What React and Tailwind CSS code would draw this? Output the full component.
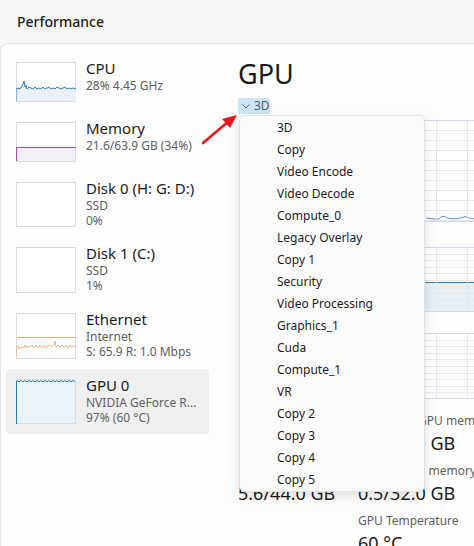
import React from "react";

const FONT = { fontFamily: '"Segoe UI", "Noto Sans", "Open Sans", sans-serif' };

function CpuThumb() {
  const pts = [[0,27],[2,26],[4,27],[6,24],[7,22],[8,19],[9,25],[10,23],[11,27],[13,25],[15,26],[17,27],[19,25],[21,27],[23,26],[25,27],[27,25],[29,27],[31,26],[33,25],[35,27],[37,26],[39,27],[41,25],[43,26],[45,27],[47,26],[49,25],[51,27],[53,26],[55,27],[57,26],[60,27]];
  const line = "M0,39 L" + pts.map(p => p.join(",")).join(" L");
  const fill = "M0,39 L" + pts.map(p => p.join(",")).join(" L") + " L60,39 Z";
  return (
    <svg width="60" height="40" viewBox="0 0 60 40" className="block">
      <rect x="0.5" y="0.5" width="59" height="39" fill="#ffffff" stroke="#d9dde2" />
      <path d={fill} fill="#eaf1f8" />
      <path d={line} fill="none" stroke="#2f7bb4" strokeWidth="1" />
    </svg>
  );
}

function MemThumb() {
  return (
    <svg width="60" height="40" viewBox="0 0 60 40" className="block">
      <rect x="0.5" y="0.5" width="59" height="39" fill="#ffffff" stroke="#d9dde2" />
      <rect x="1" y="25" width="58" height="14" fill="#f3eff6" />
      <path d="M0.5,39 L0.5,25.5 L60,25.5" fill="none" stroke="#9d55a8" strokeWidth="1.2" />
    </svg>
  );
}

function EmptyThumb({ h }) {
  return (
    <svg width="60" height={h} viewBox={`0 0 60 ${h}`} className="block">
      <rect x="0.5" y="0.5" width="59" height={h - 1} fill="#ffffff" stroke="#dcdcdc" />
    </svg>
  );
}

function EthThumb() {
  const pts = [[0,35],[2,33],[3,36],[5,34],[7,35],[9,32],[10,35],[12,33],[14,34],[16,32],[18,34],[20,33],[22,35],[24,32],[26,34],[28,33],[30,35],[32,33],[34,32],[36,34],[38,31],[39,28],[40,34],[42,32],[44,35],[46,32],[48,34],[50,33],[52,35],[54,32],[56,34],[58,33],[60,34]];
  const line = "M0,45 L" + pts.map(p => p.join(",")).join(" L");
  return (
    <svg width="60" height="46" viewBox="0 0 60 46" className="block">
      <rect x="0.5" y="0.5" width="59" height="45" fill="#ffffff" stroke="#dcdcdc" />
      <line x1="1" y1="24.5" x2="59" y2="24.5" stroke="#e9a77a" strokeWidth="1" />
      <path d={line} fill="none" stroke="#e39a6a" strokeWidth="0.8" />
    </svg>
  );
}

function GpuThumb() {
  let d = "M0.5,45 L0.5,2";
  for (let x = 1; x <= 60; x += 2) d += ` L${x},${x % 4 === 1 ? 1.5 : 2.8}`;
  return (
    <svg width="60" height="45" viewBox="0 0 60 45" className="block">
      <rect x="0.5" y="0.5" width="59" height="44" fill="#eaf2fa" stroke="#d6dde6" />
      <path d={d} fill="none" stroke="#2f7bb4" strokeWidth="1" />
    </svg>
  );
}

const items = [
  { name: "CPU", lines: ["28% 4.45 GHz"], cls: "h-[60px]", thumb: <CpuThumb /> },
  { name: "Memory", lines: ["21.6/63.9 GB (34%)"], cls: "h-[60px]", thumb: <MemThumb /> },
  { name: "Disk 0 (H: G: D:)", lines: ["SSD", "0%"], cls: "h-[65px]", thumb: <EmptyThumb h={45} /> },
  { name: "Disk 1 (C:)", lines: ["SSD", "1%"], cls: "h-[66px]", thumb: <EmptyThumb h={46} /> },
  { name: "Ethernet", lines: ["Internet", "S: 65.9  R: 1.0 Mbps"], cls: "h-[66px]", thumb: <EthThumb /> },
  { name: "GPU 0", lines: ["NVIDIA GeForce R...", "97% (60 °C)"], cls: "h-[65px]", thumb: <GpuThumb />, selected: true },
];

function Grid({ h, step, children }) {
  const vx = [8, 39, 70, 101, 132, 163, 194, 225];
  const hs = [];
  for (let y = step; y < h - 1; y += step) hs.push(y);
  return (
    <svg width="233" height={h} viewBox={`0 0 233 ${h}`} className="block">
      <rect x="0.5" y="0.5" width="240" height={h - 1} fill="#ffffff" stroke="#d4dde7" />
      {children}
      {hs.map((y, i) => (
        <line key={"h" + i} x1="1" x2="233" y1={Math.round(y) + 0.5} y2={Math.round(y) + 0.5} stroke="#e4e9ef" />
      ))}
      {vx.map((x, i) => (
        <line key={"v" + i} x1={x + 0.5} x2={x + 0.5} y1="1" y2={h - 1} stroke="#e4e9ef" />
      ))}
    </svg>
  );
}

const menuItems = [
  "3D", "Copy", "Video Encode", "Video Decode", "Compute_0", "Legacy Overlay", "Copy 1",
  "Security", "Video Processing", "Graphics_1", "Cuda", "Compute_1", "VR", "Copy 2",
  "Copy 3", "Copy 4", "Copy 5",
];

export default function App() {
  return (
    <div className="relative w-[474px] h-[546px] overflow-hidden bg-[#f8f8f8] text-[#1b1b1b]" style={FONT}>
      <div className="h-[43px] flex items-center px-[17px] text-[14px] font-medium">Performance</div>
      <div className="h-[503px] flex rounded-tl-[8px] border-t border-l border-[#e5e5e5] bg-[#fdfdfd]">
        <div className="w-[213px] shrink-0 pt-[8px] px-[5px] flex flex-col">
          {items.map((it) => (
            <div
              key={it.name}
              className={`${it.cls} flex items-start gap-[10px] px-[10px] pt-[10px] rounded-[4px] ${it.selected ? "bg-[#f0f0f0]" : ""}`}
            >
              <div className="shrink-0">{it.thumb}</div>
              <div className="-mt-[4px] min-w-0">
                <div className="text-[15px] leading-[20px] whitespace-nowrap">{it.name}</div>
                {it.lines.map((l) => (
                  <div key={l} className="text-[12px] leading-[15px] text-[#5f5f5f] whitespace-nowrap">{l}</div>
                ))}
              </div>
            </div>
          ))}
        </div>
        <div className="flex-1 pl-[24px] pt-[12px] flex flex-col min-w-0">
          <div className="text-[27px] leading-[36px]">GPU</div>
          <div className="mt-[6px] h-[16px] w-[32px] flex items-center gap-[4px] bg-[#cce4f7] pl-[4px]">
            <svg width="8" height="5" viewBox="0 0 8 5"><path d="M0.5,0.5 L4,4 L7.5,0.5" fill="none" stroke="#6a6a6a" strokeWidth="1" /></svg>
            <span className="text-[12px] leading-[16px] text-[#5a5a5a]">3D</span>
          </div>
          <div className="mt-[6px] ml-[4px]">
            <Grid h={102} step={10}>
              <path d="M184,98 L192,99 L197,99 Q201,94 205,98 L212,99 L219,98 Q223,95 227,98 L233,99" fill="none" stroke="#5b95c4" strokeWidth="1" />
            </Grid>
          </div>
          <div className="mt-[25px] ml-[4px]">
            <Grid h={65} step={6.5}>
              <rect x="1" y="35" width="232" height="29" fill="#e8eff7" />
              <line x1="1" x2="233" y1="35.5" y2="35.5" stroke="#2f7bb4" strokeWidth="1.2" />
            </Grid>
          </div>
          <div className="mt-[21px] ml-[4px]">
            <Grid h={66} step={6.6} />
          </div>
          <div className="mt-[14px] grid grid-cols-[120px_1fr]">
            <div className="pt-[66px]">
              <div className="text-[18px] leading-[28px] whitespace-nowrap">5.6/44.0 GB</div>
            </div>
            <div>
              <div className="text-[12px] leading-[16px] text-[#5f5f5f] whitespace-nowrap">Dedicated GPU memory</div>
              <div className="text-[18px] leading-[28px] whitespace-nowrap">5.1/12.0 GB</div>
              <div className="mt-[6px] text-[12px] leading-[16px] text-[#5f5f5f] whitespace-nowrap">Shared GPU memory</div>
              <div className="text-[18px] leading-[28px] whitespace-nowrap">0.5/32.0 GB</div>
              <div className="mt-[6px] text-[12px] leading-[16px] text-[#5f5f5f] whitespace-nowrap">GPU Temperature</div>
              <div className="text-[18px] leading-[28px] whitespace-nowrap">60 °C</div>
            </div>
          </div>
        </div>
      </div>

      {/* Dropdown menu */}
      <div className="absolute left-[239px] top-[115px] w-[186px] h-[377px] bg-[#fbfbfb] border border-[#e1e1e1] rounded-[6px] shadow-[0_4px_12px_rgba(0,0,0,0.12)] pt-[1px]">
        {menuItems.map((m) => (
          <div key={m} className="h-[22px] leading-[22px] pl-[37px] text-[12px] text-[#1b1b1b] whitespace-nowrap">{m}</div>
        ))}
      </div>

      {/* Red arrow */}
      <svg className="absolute left-[196px] top-[108px]" width="48" height="42" viewBox="0 0 48 42">
        <line x1="7" y1="35" x2="33" y2="13" stroke="#e3171c" strokeWidth="2.6" strokeLinecap="round" />
        <polygon points="41,7 26,11 34,20" fill="#e3171c" />
      </svg>
    </div>
  );
}
